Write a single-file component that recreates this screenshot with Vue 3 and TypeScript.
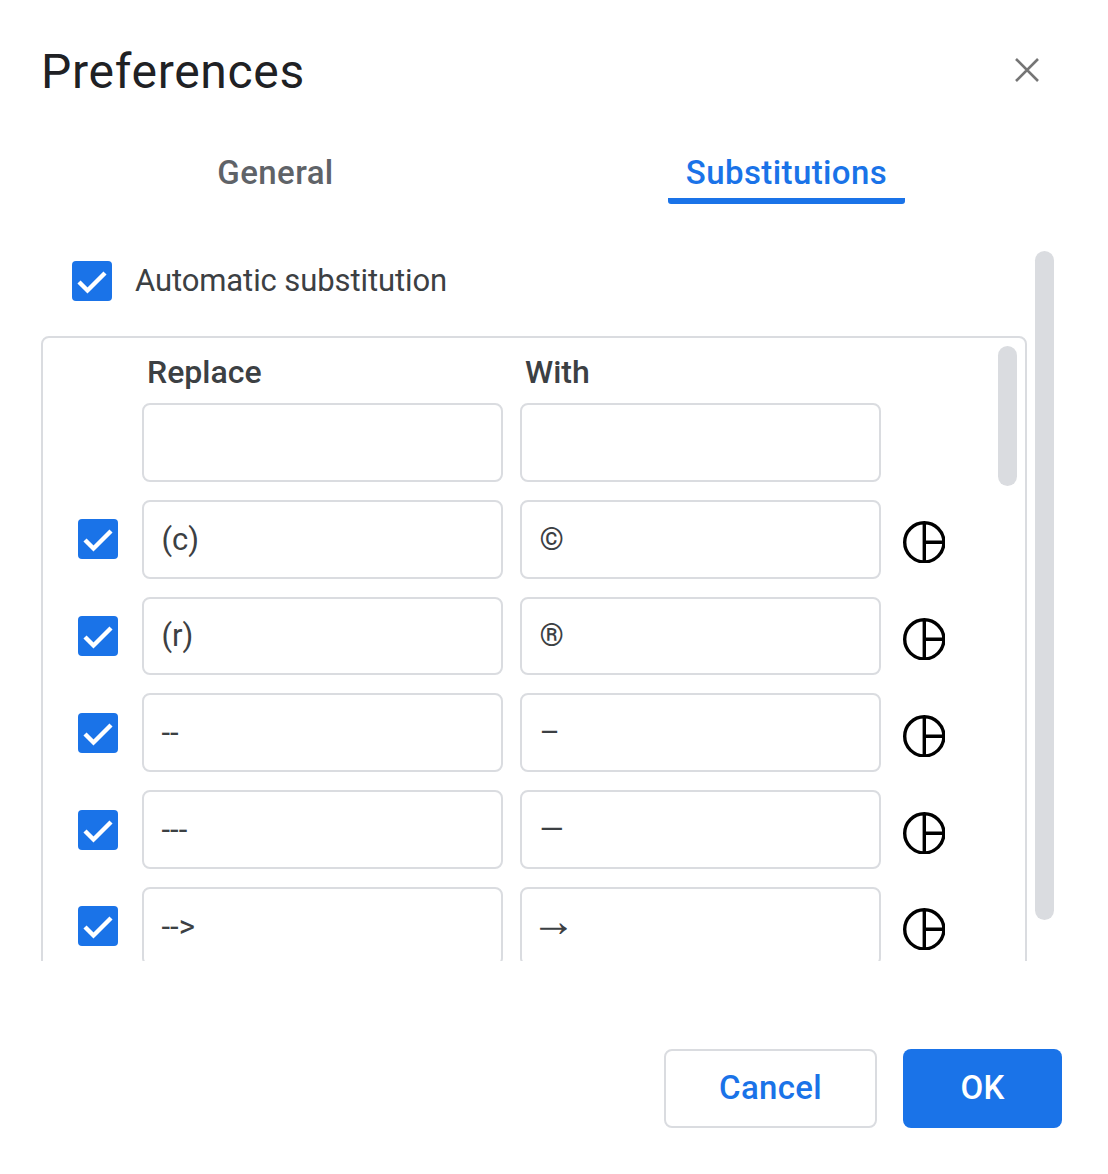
<script setup lang="ts">
interface Rule { from: string; to: string; arrow?: boolean }
const rules: Rule[] = [
  { from: '(c)', to: '©' },
  { from: '(r)', to: '®' },
  { from: '--', to: '–' },
  { from: '---', to: '—' },
  { from: '-->', to: '→', arrow: true },
]
</script>

<template>
  <div class="dialog">
    <header class="head">
      <h1 class="title">Preferences</h1>
      <button class="close" aria-label="Close">
        <svg width="26" height="26" viewBox="0 0 26 26"><path d="M2 2 24 24M24 2 2 24" stroke="#757575" stroke-width="2.6" fill="none" /></svg>
      </button>
    </header>
    <nav class="tabs">
      <div class="tab"><span class="tab-label">General</span></div>
      <div class="tab active"><span class="tab-label">Substitutions</span></div>
    </nav>
    <section class="body">
      <div class="auto">
        <span class="check"><svg width="40" height="40" viewBox="0 0 40 40"><path d="M7 21 15.5 29.5 33 12" stroke="#fff" stroke-width="4.4" fill="none" /></svg></span>
        <span class="auto-label">Automatic substitution</span>
      </div>
      <div class="box">
        <div class="grid">
          <div class="label first">Replace</div>
          <div class="label">With</div>
          <span></span>
          <div class="field first"></div>
          <div class="field"></div>
          <span></span>
          <template v-for="r in rules" :key="r.from">
            <span class="check"><svg width="40" height="40" viewBox="0 0 40 40"><path d="M7 21 15.5 29.5 33 12" stroke="#fff" stroke-width="4.4" fill="none" /></svg></span>
            <div class="field">{{ r.from }}</div>
            <div class="field" :class="{ arrow: r.arrow }">{{ r.to }}</div>
            <svg class="glyph" width="42" height="42" viewBox="0 0 42 42">
              <circle cx="21.3" cy="21.3" r="19.6" stroke="#000" stroke-width="3.4" fill="none" />
              <path d="M21.3 1V42M21.3 21.3H42" stroke="#000" stroke-width="3.4" fill="none" />
            </svg>
          </template>
        </div>
        <div class="thumb inner"></div>
      </div>
      <div class="thumb outer"></div>
    </section>
    <footer class="foot">
      <button class="btn cancel">Cancel</button>
      <button class="btn ok">OK</button>
    </footer>
  </div>
</template>

<style scoped>
.dialog {
  width: 1108px;
  height: 1174px;
  box-sizing: border-box;
  background: #fff;
  font-family: Roboto, "DejaVu Sans", "Liberation Sans", sans-serif;
  color: #3c4043;
  display: flex;
  flex-direction: column;
  overflow: hidden;
}
.head {
  display: flex;
  justify-content: space-between;
  align-items: center;
  height: 140px;
  padding: 2px 68px 0 41px;
  box-sizing: border-box;
  flex: none;
}
.title {
  margin: 0;
  font-size: 48px;
  font-weight: 400;
  letter-spacing: 0.7px;
  color: #202124;
}
.close {
  border: 0;
  background: none;
  padding: 0;
  display: flex;
  margin-bottom: 3px;
}
.tabs {
  display: grid;
  grid-template-columns: 511px 511px;
  padding-left: 20px;
  height: 64px;
  flex: none;
}
.tab {
  display: flex;
  justify-content: center;
  font-size: 33px;
  font-weight: 500;
  color: #5f6368;
}
.tab-label {
  box-sizing: border-box;
  padding: 13px 18px 0;
  height: 64px;
  letter-spacing: 0.4px;
}
.active {
  color: #1a73e8;
}
.active .tab-label {
  border-bottom: 6px solid #1a73e8;
  border-radius: 0 0 3px 3px;
}
.body {
  position: relative;
  height: 757px;
  flex: none;
  padding-left: 41px;
  overflow: hidden;
}
.auto {
  display: flex;
  align-items: center;
  gap: 23px;
  height: 132px;
  padding-left: 31px;
  padding-top: 21px;
  box-sizing: border-box;
}
.auto-label {
  font-size: 31px;
  letter-spacing: -0.1px;
}
.auto .check {
  margin-top: 1px;
}
.check {
  width: 40px;
  height: 40px;
  background: #1a73e8;
  border-radius: 4px;
  display: block;
  flex: none;
}
.check svg {
  display: block;
}
.box {
  position: relative;
  width: 986px;
  height: 700px;
  box-sizing: border-box;
  border: 2px solid #dadce0;
  border-radius: 8px;
}
.grid {
  display: grid;
  grid-template-columns: 47px 361px 361px 42px;
  column-gap: 17px;
  row-gap: 18px;
  padding: 0 0 0 35px;
  align-items: center;
}
.grid > .label {
  font-size: 32px;
  font-weight: 500;
  height: 53px;
  padding: 12px 0 0 5px;
  margin-bottom: -18px;
  line-height: 44px;
}
.label.first,
.field.first {
  grid-column: 2;
}
.field {
  height: 78.8px;
  box-sizing: border-box;
  border: 2px solid #dadce0;
  border-radius: 8px;
  padding-left: 17.5px;
  font-size: 31px;
  display: flex;
  align-items: center;
}
.arrow {
  font-family: "Liberation Sans", sans-serif;
  font-size: 45px;
  padding-left: 9px;
  padding-bottom: 10px;
}
.glyph {
  display: block;
  margin: 6px 0 0 5px;
}
.thumb {
  position: absolute;
  background: #dadce0;
  border-radius: 10px;
  width: 19px;
}
.inner {
  right: 8px;
  top: 8px;
  height: 140px;
}
.outer {
  left: 1035px;
  top: 47px;
  height: 669px;
}
.foot {
  display: flex;
  justify-content: flex-end;
  gap: 26px;
  padding: 88px 46px 0 0;
  flex: none;
}
.btn {
  height: 79px;
  box-sizing: border-box;
  border-radius: 8px;
  font-family: inherit;
  font-size: 33px;
  font-weight: 500;
  letter-spacing: 0.3px;
  padding: 0 0 2px;
}
.cancel {
  width: 213px;
  background: #fff;
  border: 2px solid #dadce0;
  color: #1a73e8;
}
.ok {
  width: 159px;
  background: #1a73e8;
  border: 0;
  color: #fff;
}
</style>
